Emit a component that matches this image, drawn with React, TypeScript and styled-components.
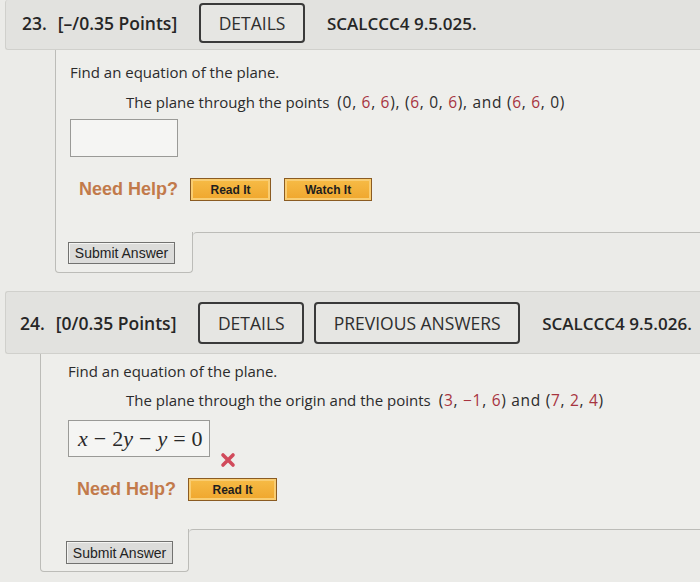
import React from "react";
import styled, { createGlobalStyle } from "styled-components";

const Global = createGlobalStyle`
  html, body { margin: 0; padding: 0; background: #ebebe8; }
  body {
    font-family: "Open Sans", "Noto Sans", sans-serif;
    color: #2b2b2b;
    width: 700px;
    height: 582px;
    overflow: hidden;
  }
`;

const Page = styled.main`
  display: flex;
  flex-direction: column;
  padding-left: 5px;
`;

const Question = styled.section<{ $mt: number }>`
  display: flex;
  flex-direction: column;
  margin-top: ${(p) => p.$mt}px;
`;

const Header = styled.header<{ $pt: number; $pb: number; $pl: number; $topBorder: boolean }>`
  display: flex;
  align-items: center;
  gap: 22px;
  padding: ${(p) => p.$pt}px 0 ${(p) => p.$pb}px ${(p) => p.$pl}px;
  background: #e2e2df;
  border: 1px solid #d0d0cc;
  border-right: none;
  border-top: ${(p) => (p.$topBorder ? "1px solid #d0d0cc" : "none")};
  border-radius: 3px 0 0 3px;
  white-space: nowrap;
`;

const Points = styled.span`
  display: flex;
  gap: 11px;
  font-size: 17.5px;
  font-weight: 600;
  color: #262626;
`;

const TagGroup = styled.div`
  display: flex;
  gap: 10px;
`;

const Tag = styled.span<{ $h: number }>`
  display: flex;
  align-items: center;
  height: ${(p) => p.$h}px;
  box-sizing: border-box;
  padding: 0 17.5px;
  border: 2px solid #3a3a3a;
  border-radius: 4px;
  font-size: 17.5px;
  color: #2e2e2e;
  background: #e6e6e3;
`;

const Code = styled.span`
  font-size: 17px;
  font-weight: 600;
  color: #262626;
`;

const Body = styled.div<{ $indent: number }>`
  display: flex;
  flex-direction: column;
  margin-left: ${(p) => p.$indent}px;
`;

const Content = styled.div<{ $pl: number; $pt: number; $pb: number }>`
  display: flex;
  flex-direction: column;
  align-items: flex-start;
  border-left: 1px solid #bcbcb8;
  padding: ${(p) => p.$pt}px 0 ${(p) => p.$pb}px ${(p) => p.$pl}px;
  background: #eeeeeb;
`;

const Line = styled.p<{ $indent?: number; $mt?: number }>`
  margin: ${(p) => p.$mt ?? 0}px 0 0 ${(p) => p.$indent ?? 0}px;
  font-size: 15px;
  line-height: 20px;
  color: #2b2b2b;
  white-space: nowrap;
`;

const MathPts = styled.span`
  margin-left: 8px;
  font-size: 15.5px;
  letter-spacing: 0.7px;
`;

const Num = styled.span`
  color: #a7343f;
`;

const AnswerRow = styled.div<{ $mt: number }>`
  display: flex;
  align-items: flex-start;
  gap: 10px;
  margin-top: ${(p) => p.$mt}px;
`;

const AnswerBox = styled.div<{ $w: number; $h: number }>`
  display: flex;
  align-items: center;
  width: ${(p) => p.$w}px;
  height: ${(p) => p.$h}px;
  box-sizing: border-box;
  padding-left: 9px;
  background: #f5f5f3;
  border: 1px solid #9a9a97;
`;

const MathExpr = styled.span`
  display: inline-flex;
  align-items: baseline;
  font-family: "Liberation Serif", "DejaVu Serif", serif;
  font-size: 22px;
  color: #2a2a2a;
  white-space: nowrap;
`;

const Var = styled.i`
  font-style: italic;
`;

const Op = styled.span`
  margin: 0 6px;
`;

const WrongMark = styled.svg`
  margin-top: 32px;
  flex: none;
`;

const HelpRow = styled.div<{ $mt: number }>`
  display: flex;
  align-items: center;
  gap: 12px;
  margin: ${(p) => p.$mt}px 0 0 9px;
`;

const HelpLabel = styled.span`
  font-family: "Liberation Sans", Arial, sans-serif;
  font-weight: 700;
  font-size: 18px;
  color: #c27a4b;
`;

const HelpButton = styled.span<{ $w: number }>`
  display: flex;
  align-items: center;
  justify-content: center;
  width: ${(p) => p.$w}px;
  height: 23px;
  box-sizing: border-box;
  background: linear-gradient(#f7bc47, #efa62d);
  border: 1px solid #8a5b22;
  box-shadow: inset 0 0 0 2px #f9cd72;
  font-family: "Liberation Sans", Arial, sans-serif;
  font-weight: 700;
  font-size: 12px;
  color: #1e1e1e;
  & + & {
    margin-left: 1px;
  }
`;

const Footer = styled.div`
  display: flex;
`;

const SubmitTab = styled.div<{ $w: number; $pl: number; $pt: number; $pb: number }>`
  width: ${(p) => p.$w}px;
  box-sizing: border-box;
  padding: ${(p) => p.$pt}px 0 ${(p) => p.$pb}px ${(p) => p.$pl}px;
  border: 1px solid #bcbcb8;
  border-top: none;
  border-radius: 0 0 4px 4px;
  background: #eeeeeb;
`;

const FooterRest = styled.div`
  flex: 1;
  border-top: 1px solid #bcbcb8;
  border-top-left-radius: 4px;
`;

const SubmitButton = styled.span<{ $h: number }>`
  display: inline-flex;
  align-items: center;
  justify-content: center;
  vertical-align: top;
  width: 107px;
  height: ${(p) => p.$h}px;
  box-sizing: border-box;
  background: #dcdcda;
  border: 1px solid #727270;
  box-shadow: inset 1px 1px 0 #f4f4f2;
  font-family: "Liberation Sans", Arial, sans-serif;
  font-size: 14px;
  color: #222;
`;

export default function App() {
  return (
    <>
      <Global />
      <Page>
        <Question $mt={0}>
          <Header $pt={3} $pb={6} $pl={16} $topBorder={false}>
            <Points>
              <span>23.</span>
              <span>[–/0.35 Points]</span>
            </Points>
            <Tag $h={40}>DETAILS</Tag>
            <Code>SCALCCC4 9.5.025.</Code>
          </Header>
          <Body $indent={50}>
            <Content $pl={14} $pt={12} $pb={31}>
              <Line>Find an equation of the plane.</Line>
              <Line $indent={56} $mt={10}>
                The plane through the points
                <MathPts>
                  (0, <Num>6</Num>, <Num>6</Num>), (<Num>6</Num>, 0, <Num>6</Num>), and (<Num>6</Num>, <Num>6</Num>, 0)
                </MathPts>
              </Line>
              <AnswerRow $mt={7}>
                <AnswerBox $w={108} $h={38} />
              </AnswerRow>
              <HelpRow $mt={21}>
                <HelpLabel>Need Help?</HelpLabel>
                <HelpButton $w={81}>Read It</HelpButton>
                <HelpButton $w={88}>Watch It</HelpButton>
              </HelpRow>
            </Content>
            <Footer>
              <SubmitTab $w={138} $pl={12} $pt={10} $pb={8}>
                <SubmitButton $h={22}>Submit Answer</SubmitButton>
              </SubmitTab>
              <FooterRest />
            </Footer>
          </Body>
        </Question>

        <Question $mt={18}>
          <Header $pt={10} $pb={9} $pl={14} $topBorder>
            <Points>
              <span>24.</span>
              <span>[0/0.35 Points]</span>
            </Points>
            <TagGroup>
              <Tag $h={42}>DETAILS</Tag>
              <Tag $h={42}>PREVIOUS ANSWERS</Tag>
            </TagGroup>
            <Code>SCALCCC4 9.5.026.</Code>
          </Header>
          <Body $indent={35}>
            <Content $pl={27} $pt={7} $pb={28}>
              <Line>Find an equation of the plane.</Line>
              <Line $indent={58} $mt={9}>
                The plane through the origin and the points
                <MathPts>
                  (<Num>3</Num>, <Num>−1</Num>, <Num>6</Num>) and (<Num>7</Num>, <Num>2</Num>, <Num>4</Num>)
                </MathPts>
              </Line>
              <AnswerRow $mt={10}>
                <AnswerBox $w={142} $h={37}>
                  <MathExpr>
                    <Var>x</Var>
                    <Op>−</Op>
                    <span>2</span>
                    <Var>y</Var>
                    <Op>−</Op>
                    <Var>y</Var>
                    <Op>=</Op>
                    <span>0</span>
                  </MathExpr>
                </AnswerBox>
                <WrongMark width="16" height="16" viewBox="0 0 16 16">
                  <path d="M3 3 L13 13 M13 3 L3 13" stroke="#d14a5b" strokeWidth="3.6" strokeLinecap="round" />
                </WrongMark>
              </AnswerRow>
              <HelpRow $mt={10}>
                <HelpLabel>Need Help?</HelpLabel>
                <HelpButton $w={89}>Read It</HelpButton>
              </HelpRow>
            </Content>
            <Footer>
              <SubmitTab $w={149} $pl={25} $pt={12} $pb={7}>
                <SubmitButton $h={23}>Submit Answer</SubmitButton>
              </SubmitTab>
              <FooterRest />
            </Footer>
          </Body>
        </Question>
      </Page>
    </>
  );
}
